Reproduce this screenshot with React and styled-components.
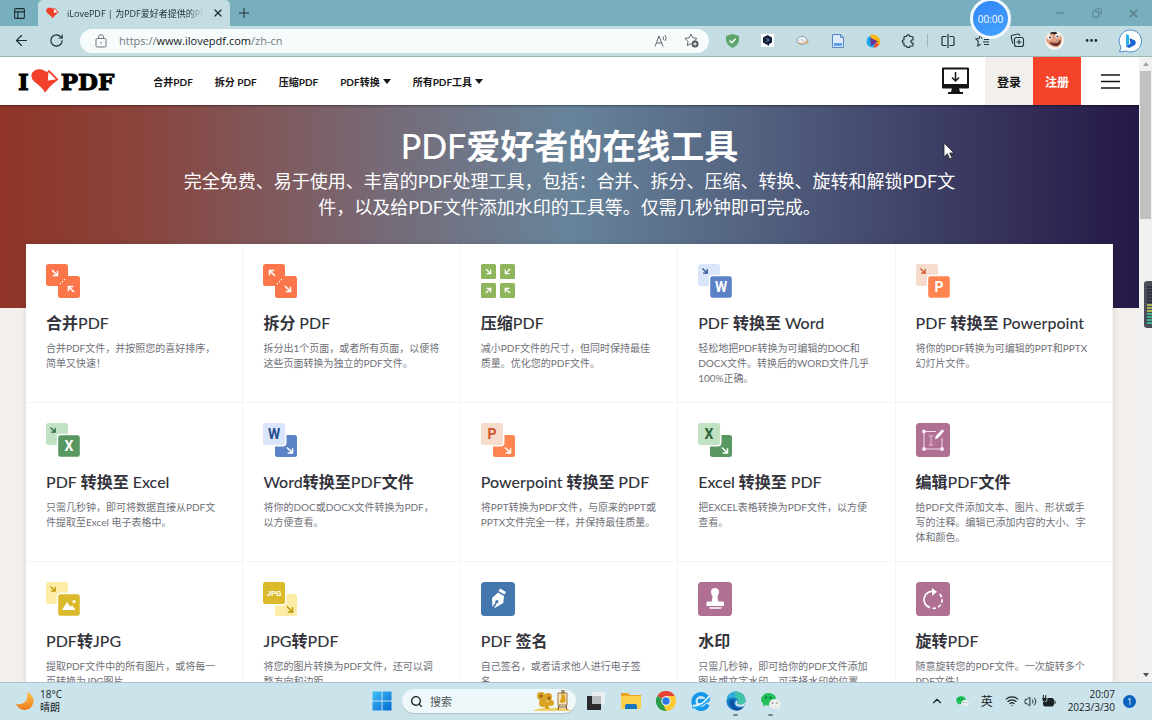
import styled, { createGlobalStyle } from "styled-components";
import {
    ArrowLeft, RotateCw, Plus, X, Minus, Copy, Search, Wifi, Volume2,
    ChevronUp, Ellipsis, PanelsTopLeft
} from "lucide-react";

const siteFont = `Lato, "Noto Sans CJK SC", sans-serif`
const systemFont = `"Open Sans", "Noto Sans CJK SC", sans-serif`

const colors = {
    orange: "#fb774b",
    green: "#8fb55c",
    plum: "#af7094",
    blue: "#4477ae",
}

const word = { dark: "#5b82c6", light: "#dae5fb", ink: "#26508f", letter: "W" }
const powerpoint = { dark: "#ff8450", light: "#f5dccc", ink: "#d2532a", letter: "P" }
const excel = { dark: "#58975f", light: "#c1e2c3", ink: "#2b643a", letter: "X" }
const jpg = { dark: "#dab92a", light: "#fdeca5", ink: "#b99700", letter: "JPG" }

const navItems = [
    { text: "合并PDF" },
    { text: "拆分 PDF" },
    { text: "压缩PDF" },
    { text: "PDF转换", menu: true },
    { text: "所有PDF工具", menu: true },
]

const tools = [
    { icon: <MergeIcon />, title: "合并PDF", text: "合并PDF文件，并按照您的喜好排序，简单又快速！" },
    { icon: <MergeIcon split />, title: "拆分 PDF", text: "拆分出1个页面，或者所有页面，以便将这些页面转换为独立的PDF文件。" },
    { icon: <CompressIcon />, title: "压缩PDF", text: "减小PDF文件的尺寸，但同时保持最佳质量。优化您的PDF文件。" },
    { icon: <FromPdfIcon {...word} />, title: "PDF 转换至 Word", text: "轻松地把PDF转换为可编辑的DOC和DOCX文件。转换后的WORD文件几乎100%正确。" },
    { icon: <FromPdfIcon {...powerpoint} />, title: "PDF 转换至 Powerpoint", text: "将你的PDF转换为可编辑的PPT和PPTX幻灯片文件。" },
    { icon: <FromPdfIcon {...excel} />, title: "PDF 转换至 Excel", text: "只需几秒钟，即可将数据直接从PDF文件提取至Excel 电子表格中。" },
    { icon: <ToPdfIcon {...word} />, title: "Word转换至PDF文件", text: "将你的DOC或DOCX文件转换为PDF，以方便查看。" },
    { icon: <ToPdfIcon {...powerpoint} />, title: "Powerpoint 转换至 PDF", text: "将PPT转换为PDF文件，与原来的PPT或PPTX文件完全一样，并保持最佳质量。" },
    { icon: <ToPdfIcon {...excel} />, title: "Excel 转换至 PDF", text: "把EXCEL表格转换为PDF文件，以方便查看。" },
    { icon: <EditIcon />, title: "编辑PDF文件", text: "给PDF文件添加文本、图片、形状或手写的注释。编辑已添加内容的大小、字体和颜色。" },
    { icon: <FromPdfIcon {...jpg} picture />, title: "PDF转JPG", text: "提取PDF文件中的所有图片，或将每一页转换为JPG图片。" },
    { icon: <ToJpgIcon />, title: "JPG转PDF", text: "将您的图片转换为PDF文件，还可以调整方向和边距。" },
    { icon: <SignIcon />, title: "PDF 签名", text: "自己签名，或者请求他人进行电子签名。" },
    { icon: <StampIcon />, title: "水印", text: "只需几秒钟，即可给你的PDF文件添加图片或文字水印。可选择水印的位置。" },
    { icon: <RotateIcon />, title: "旋转PDF", text: "随意旋转您的PDF文件。一次旋转多个PDF文件！" },
]

// Latin words are set lighter than the Chinese around them
function Mixed({ text }) {
    return text.split(/([A-Za-z]+)/).map((part, i) =>
        i % 2 === 1 ? <Latin key={i}>{part}</Latin> : part
    )
}

export default function App() {
    return (
        <Desktop>
            <GlobalStyle />
            <TabStrip />
            <Toolbar />
            <Content>
                <Site>
                    <SiteHeader />
                    <Hero>
                        <HeroTitle><Mixed text="PDF爱好者的在线工具" /></HeroTitle>
                        <HeroText>
                            完全免费、易于使用、丰富的PDF处理工具，包括：合并、拆分、压缩、转换、旋转和解锁PDF文件，以及给PDF文件添加水印的工具等。仅需几秒钟即可完成。
                        </HeroText>
                    </Hero>
                    <ToolGrid>
                        {tools.map(tool =>
                            <ToolCard href="#" key={tool.title}>
                                {tool.icon}
                                <ToolTitle><Mixed text={tool.title} /></ToolTitle>
                                <ToolText>{tool.text}</ToolText>
                            </ToolCard>
                        )}
                    </ToolGrid>
                </Site>
                <Scrollbar>
                    <ScrollArrow $up />
                    <ScrollThumb />
                    <ScrollArrow />
                </Scrollbar>
            </Content>
            <Taskbar />
            <Recorder>00:00</Recorder>
            <LevelMeter />
            <Pointer viewBox="0 0 12 18">
                <path d="M1 1v14l3.400-3.200 2.300 5.200 2.300-1-2.300-5H11z" fill="#fff" stroke="#222" strokeWidth=".8" />
            </Pointer>
        </Desktop>
    )
};

function TabStrip() {
    return (
        <TabStripStyle>
            <StripButton aria-label="标签操作"><PanelsTopLeft size={13} strokeWidth={2} /></StripButton>
            <Tab>
                <Heart width="13" height="12" />
                <TabTitle>iLovePDF | 为PDF爱好者提供的PDF</TabTitle>
                <TabClose aria-label="关闭标签"><X size={12} strokeWidth={2.500} /></TabClose>
            </Tab>
            <NewTab aria-label="新标签"><Plus size={16} strokeWidth={1.500} /></NewTab>
            <WindowControls>
                <WindowButton aria-label="最小化"><Minus size={12} strokeWidth={2} /></WindowButton>
                <WindowButton aria-label="还原"><Copy size={10} strokeWidth={2} transform="rotate(90)" /></WindowButton>
                <WindowButton aria-label="关闭"><X size={13} strokeWidth={2} /></WindowButton>
            </WindowControls>
        </TabStripStyle>
    )
}

function Toolbar() {
    return (
        <ToolbarStyle>
            <BarButton aria-label="返回"><ArrowLeft size={17} strokeWidth={1.700} /></BarButton>
            <BarButton aria-label="刷新"><RotateCw size={15} strokeWidth={1.800} /></BarButton>
            <AddressBar>
                <svg width="12" height="14" viewBox="0 0 12 14" fill="none" stroke="#6d7578">
                    <rect x="1" y="4.500" width="10" height="8.500" rx="1.200" />
                    <path d="M3.500 4.500V3.200a2.500 2.500 0 0 1 5 0v1.300" />
                    <circle cx="6" cy="8.700" r=".8" fill="#6d7578" stroke="none" />
                </svg>
                <Url href="#">https://<b>www.ilovepdf.com</b>/zh-cn</Url>
                <svg width="14" height="14" viewBox="0 0 14 14" fill="none" stroke="#62696c">
                    <path d="M1 12.500 5 2l4 10.500M2.500 9h5M9 2.500q1.500 1.500 0 3.500M11 1q2.500 2.500 0 6" />
                </svg>
                <svg width="15" height="15" viewBox="0 0 15 15" fill="none" stroke="#62696c">
                    <path d="m7 1 1.800 3.800 4.200.6-3 2.800M7 1 5.200 4.800 1 5.400l3 3-.7 4.100L7 10.600" />
                    <circle cx="11" cy="11" r="3.500" fill="#50575a" stroke="none" />
                    <path d="M9.200 11h3.600M11 9.200v3.600" stroke="#fff" />
                </svg>
            </AddressBar>
            <BarButton aria-label="防护">
                <svg width="13" height="14" viewBox="0 0 13 14">
                    <path d="M6.500 0 13 2v4.500Q12 11.500 6.500 14 1 11.500 0 6.500V2z" fill="#5fa66c" />
                    <path d="m3.600 6.500 2.200 2.200 3.800-4" fill="none" stroke="#fff" strokeWidth="1.300" />
                </svg>
            </BarButton>
            <BarButton aria-label="翻译">
                <svg width="13" height="13" viewBox="0 0 13 13">
                    <path d="M0 0h13v13H0z" fill="#fff" />
                    <path d="m6.500 1 4.500 2.500v5L8 10.200V12l-2-1.200-4-2.300v-5z" fill="#12233e" />
                    <path d="m5.500 4.500 2.500 1.500-2.500 1.500" fill="none" stroke="#9fb2ca" strokeWidth=".8" />
                </svg>
            </BarButton>
            <BarButton aria-label="扩展">
                <svg width="13" height="12" viewBox="0 0 13 12" fill="none">
                    <ellipse cx="6" cy="5.500" rx="5" ry="4" fill="#f3f7fa" stroke="#7d90a8" strokeWidth=".9" />
                    <path d="M3 5.500q4-2 5 1" stroke="#9fb0c4" strokeWidth=".8" />
                    <path d="M2 8q6 1 8-1.500h2.500L10 9.500" stroke="#e5a050" strokeWidth="1" />
                </svg>
            </BarButton>
            <BarButton aria-label="文档">
                <svg width="12" height="14" viewBox="0 0 12 14">
                    <path d="M.5.500h8l3 3v10H.5z" fill="#dce9fb" stroke="#5684c4" />
                    <path d="M2 9h8v3H2z" fill="#5aa3ea" />
                    <path d="M8.500.500v3h3" fill="none" stroke="#5684c4" />
                </svg>
            </BarButton>
            <BarButton aria-label="视频">
                <svg width="14" height="14" viewBox="0 0 14 14">
                    <circle cx="6.500" cy="7.500" r="6" fill="#1ca6e6" />
                    <path d="M4 1q6-2 9 3t-1 8L6 7z" fill="#fcb711" />
                    <path d="m4 3.500 8 4-7 4.500z" fill="#663399" />
                    <path d="M8 14q4-1 5-4l-4-1z" fill="#ef4d3c" />
                </svg>
            </BarButton>
            <BarButton aria-label="扩展管理">
                <svg width="14" height="14" viewBox="0 0 14 14" fill="none" stroke="#25343a" strokeWidth="1.200" strokeLinejoin="round">
                    <path d="M3 3.500q0-1 1-1h1.500a1.700 1.700 0 0 1 3.400 0H11q1 0 1 1V6a1.600 1.600 0 1 0 0 3v2q0 1-1 1H9a1.700 1.700 0 0 1-3.400 0H4q-1 0-1-1V9.200a1.700 1.700 0 0 1 0-3.400z" />
                </svg>
            </BarButton>
            <Separator />
            <BarButton aria-label="分屏">
                <svg width="14" height="14" viewBox="0 0 14 14" fill="none" stroke="#25343a" strokeWidth="1.200">
                    <path d="M5.500 2.500H2q-1 0-1 1v7q0 1 1 1h3.500M8.500 2.500H12q1 0 1 1v7q0 1-1 1H8.500M7 0v14" />
                </svg>
            </BarButton>
            <BarButton aria-label="收藏夹">
                <svg width="15" height="14" viewBox="0 0 15 14" fill="none" stroke="#25343a" strokeWidth="1.100">
                    <path d="M7 4.500 5.500 1 4 4.500 1 5l2.300 2.500L2.700 12l3-1.700M9 5.500h5M8 8h6M9 10.500h5" />
                </svg>
            </BarButton>
            <BarButton aria-label="集锦">
                <svg width="15" height="15" viewBox="0 0 15 15" fill="none" stroke="#25343a" strokeWidth="1.100">
                    <rect x="4.500" y="4.500" width="9" height="9" rx="2" />
                    <path d="M9 6.500v5M6.500 9h5M2.800 10.500 1.200 4.200q-.2-1.500 1.300-2L8 1q1.400-.2 2 1.800" />
                </svg>
            </BarButton>
            <BarButton $width={38} aria-label="用户">
                <svg width="19" height="19" viewBox="0 0 19 19">
                    <circle cx="9.500" cy="9.500" r="9.500" fill="#f7f4f0" />
                    <path d="M1 8q1-5 7-5 8-1 9 4 0 6-4 9-4 1-8-2-4-2-4-6z" fill="#e0a07c" />
                    <path d="M4.500 2.500q1-2 4-1.500 3-1 4 1.500l-3 1z" fill="#2f2a2d" />
                    <circle cx="4.500" cy="6.500" r="2.300" fill="#fff" /><circle cx="12.500" cy="5" r="2.300" fill="#fff" />
                    <circle cx="5" cy="6.500" r="1" fill="#222" /><circle cx="12.500" cy="5.500" r="1" fill="#222" />
                    <path d="M4.500 11.500q5 0 11-2.500 1 5-4 6-5 0-7-3.500z" fill="#6b2a24" />
                    <path d="M6 12q4 0 8-2v1q-4 2-8 1z" fill="#f3ddd0" />
                </svg>
            </BarButton>
            <BarButton $width={36} aria-label="更多"><Ellipsis size={15} strokeWidth={2.500} /></BarButton>
            <BarButton $width={42} aria-label="必应">
                <svg width="24" height="24" viewBox="0 0 24 24">
                    <path d="M12 1a11 11 0 1 1-4 21L1.500 23 3 18A11 11 0 0 1 12 1z" fill="#fff" stroke="#4e8fc8" />
                    <path d="m8 5 3 1.200v9L8 17.500z" fill="#2cb1ee" />
                    <path d="m11.500 9 5.500 2.500q2 3-1 5L11 19l-3-1.500 4.500-3z" fill="#1b62d4" />
                </svg>
            </BarButton>
        </ToolbarStyle>
    )
}

function SiteHeader() {
    return (
        <HeaderStyle>
            <Logo href="#">I<Heart width="28" height="24" />PDF</Logo>
            <Nav>
                {navItems.map(item =>
                    <NavLink href="#" key={item.text}>
                        {item.text}
                        {item.menu && <Caret />}
                    </NavLink>
                )}
            </Nav>
            <DesktopLink href="#" aria-label="桌面版">
                <svg width="29" height="28" viewBox="0 0 29 28">
                    <path d="M2 1.500h25v19H2z" fill="#fff" stroke="#161616" strokeWidth="2" strokeLinejoin="round" />
                    <path d="M1 17h27v4H1zM11 21h7l1 4h3v2H7v-2h3z" fill="#161616" />
                    <path d="M14.500 5v8.500M11 10.500l3.500 3.500 3.500-3.500" fill="none" stroke="#161616" strokeWidth="1.500" />
                </svg>
            </DesktopLink>
            <AccountButton>登录</AccountButton>
            <AccountButton $primary>注册</AccountButton>
            <MenuButton aria-label="菜单">
                <svg width="19" height="15" viewBox="0 0 19 15" stroke="#161616" strokeWidth="1.400">
                    <path d="M0 1h19M0 7.500h19M0 14h19" />
                </svg>
            </MenuButton>
        </HeaderStyle>
    )
}

function Taskbar() {
    return (
        <TaskbarStyle>
            <Weather>
                <svg width="18" height="18" viewBox="0 0 18 18">
                    <defs>
                        <linearGradient id="moon" x2="0" y2="1">
                            <stop stopColor="#fbc34a" /><stop offset="1" stopColor="#ef7a1c" />
                        </linearGradient>
                    </defs>
                    <path d="M11 0q7 3 6.500 10-1.500 7.500-8.500 8Q3 18 0 12q8 1 10.500-4 1.500-4 .5-8z" fill="url(#moon)" />
                </svg>
                <Lines><span>18°C</span><span>晴朗</span></Lines>
            </Weather>
            <TaskCenter>
                <TaskButton aria-label="开始">
                    <svg width="20" height="20" viewBox="0 0 20 20">
                        <defs>
                            <linearGradient id="win" x2="1" y2="1">
                                <stop stopColor="#3fc0f8" /><stop offset="1" stopColor="#0468d2" />
                            </linearGradient>
                        </defs>
                        <path d="M.5.500h9v9h-9zM10.500.500h9v9h-9zM.5 10.500h9v9h-9zM10.500 10.500h9v9h-9z" fill="url(#win)" />
                    </svg>
                </TaskButton>
                <SearchBox>
                    <Search size={13} strokeWidth={2.500} />
                    <input type="text" placeholder="搜索" aria-label="搜索" />
                    <svg width="40" height="22" viewBox="0 0 40 22">
                        <path d="M0 21q6-4 20-3 12-1 19 3z" fill="#efd16b" />
                        <g fill="#d9a321">
                            <circle cx="8" cy="6" r="4" /><circle cx="15" cy="7" r="4" />
                            <circle cx="10" cy="13" r="4" /><circle cx="18" cy="13" r="3" /><path d="M12 12h4v7h-4z" />
                        </g>
                        <circle cx="8" cy="6" r="1.500" fill="#8c5c14" /><circle cx="16" cy="8" r="1.500" fill="#8c5c14" />
                        <path d="M25 3h9v12h-9z" fill="#f5e6c0" stroke="#a5763a" />
                        <path d="M29 0h2v3h-2zM26 15l-1 5M33 15l1 5M25 17h9" stroke="#7c5528" fill="none" />
                        <path d="M28 5q4-2 4 2 2 5-2 6-4 0-3-3 2-1 1-5z" fill="#dca11c" />
                    </svg>
                </SearchBox>
                <TaskButton aria-label="任务视图">
                    <svg width="20" height="18" viewBox="0 0 20 18">
                        <path d="M1 4h14v14H1z" fill="#2b2b2e" /><path d="M6 0h13v12H6z" fill="#eef0f1" opacity=".85" />
                        <path d="M6 4h9v8H6z" fill="#b9bdc0" />
                    </svg>
                </TaskButton>
                <TaskButton aria-label="文件资源管理器">
                    <svg width="20" height="18" viewBox="0 0 20 18">
                        <path d="M0 1h7l2 2h11v6H0z" fill="#e8a51d" /><path d="M0 4h20v13H0z" fill="#fdcf4d" />
                        <path d="M4 17v-3q0-2 2-2h8q2 0 2 2v3z" fill="#1673be" />
                    </svg>
                </TaskButton>
                <TaskButton aria-label="Chrome">
                    <svg width="20" height="20" viewBox="0 0 20 20">
                        <path d="M10 10 1.300 5A10 10 0 0 1 18.700 5z" fill="#e54335" />
                        <path d="M10 10V5h8.700A10 10 0 0 1 10 20z" fill="#fcc934" />
                        <path d="M10 10 10.500 20A10 10 0 0 1 1.300 5z" fill="#2c9e4b" />
                        <path d="m10 20 5-8-5-2-2 5z" fill="#fcc934" />
                        <circle cx="10" cy="10" r="4.700" fill="#fff" /><circle cx="10" cy="10" r="3.700" fill="#2b78e8" />
                    </svg>
                </TaskButton>
                <TaskButton aria-label="浏览器">
                    <svg width="20" height="20" viewBox="0 0 20 20" fill="none">
                        <path d="M16.800 13.500A7.500 7.500 0 1 1 17 8q0 2-3 2H7" stroke="#1297ec" strokeWidth="4" />
                        <path d="M2 15q9 1 16.500-9.500" stroke="#fff" strokeWidth="2.500" />
                        <path d="M1 16.500q10 .5 18-10" stroke="#2fb0f5" strokeWidth="1.800" />
                    </svg>
                </TaskButton>
                <TaskButton $open aria-label="Edge">
                    <svg width="20" height="20" viewBox="0 0 20 20">
                        <circle cx="10" cy="10" r="9.500" fill="#1278c8" />
                        <path d="M.6 9Q2 1 10 .500q8 .5 9.500 8.500-.5 4.500-5 4.500-3 0-3-2 1.500-2-1-4Q5 5 .6 9z" fill="#41c3a8" />
                        <path d="M.6 9Q2 2 9 .600q-1 4 1.500 6.900Q5 5 .6 9z" fill="#2dadde" />
                        <path d="M8 9q-2 5 2.500 7.500 4 1.500 7.500-1-3 4.500-8 4Q3 16 4 11q1-3 4-2z" fill="#0b4f9e" />
                        <path d="M11 9q1 1 0 3 1 2 4 1.500 3-.5 4.300-2.500-.3 3-2.300 4.500-4 1-7-1-2-3 1-5.500z" fill="#d4e9f1" />
                    </svg>
                </TaskButton>
                <TaskButton $open aria-label="微信"><WeChatIcon width="20" height="17" /></TaskButton>
            </TaskCenter>
            <Tray>
                <ChevronUp size={14} strokeWidth={2} />
                <WeChatIcon width="13" height="11" />
                <Language>英</Language>
                <TrayIcons>
                    <Wifi size={14} strokeWidth={2} />
                    <Volume2 size={13} strokeWidth={1.800} />
                    <svg width="14" height="13" viewBox="0 0 14 13">
                        <rect x="1.500" y="3.500" width="10" height="7.500" rx="1.500" fill="#1b2225" stroke="#1b2225" />
                        <path d="M12.500 5.500h1v3.500h-1z" fill="#1b2225" />
                        <path d="M0 2.500h5v2.300q0 2-2.500 2T0 4.800z" fill="#1b2225" stroke="#cbe3eb" strokeWidth=".8" />
                        <path d="M1.300 0v3M3.700 0v3M2.500 6v5" stroke="#1b2225" fill="none" />
                    </svg>
                </TrayIcons>
                <Lines $end><span>20:07</span><span>2023/3/30</span></Lines>
                <Badge>1</Badge>
            </Tray>
        </TaskbarStyle>
    )
}

function Heart(props) {
    return (
        <svg viewBox="0 0 28 24" {...props}>
            <path d="M14 23.500Q11 18 3 12.500-1 8 1.200 3.500 5-1 11 .500l5 2.500L18 .800 27.500 10.500Q20 16 17 20q-1.500 2-3 3.500z" fill="#f2402b" />
            <path d="M17.500 3 16.800 11.500 25 10.500z" fill="#fff" />
        </svg>
    )
}

function WeChatIcon(props) {
    return (
        <svg viewBox="0 0 20 17" {...props}>
            <path d="M7.500 0Q15 .500 15 6.500q-1 6-7.500 6l-2.500-.5L2 13.500l.5-2.500Q0 9 0 6.500 1 .500 7.500 0z" fill="#1fc15c" />
            <circle cx="5" cy="4.500" r="1" fill="#17572f" /><circle cx="9.500" cy="4.500" r="1" fill="#17572f" />
            <path d="M13.500 6Q20 6.500 20 11q0 2-1.500 3.500l.5 2-2.500-1q-8 1-8.500-4.500Q8.500 6.500 13.500 6z" fill="#eceeee" />
            <circle cx="11.500" cy="10" r=".8" fill="#777" /><circle cx="16" cy="10" r=".8" fill="#777" />
        </svg>
    )
}

// arrow in a 7x7 box, pointing to the bottom right until turned
function Arrow({ x, y, turn = 0, color = "#fff", size = 7 }) {
    return (
        <path
            d="M.5.500 6 6M6 1.200V6H1.200"
            transform={`translate(${x} ${y}) scale(${size / 7}) rotate(${turn} 3.500 3.500)`}
            fill="none" stroke={color} strokeWidth="1.500"
        />
    )
}

function MergeIcon({ split }) {
    return (
        <ToolIcon viewBox="0 0 34 34">
            <rect width="22" height="22" rx="2.500" fill={colors.orange} />
            <rect x="12" y="12" width="22" height="22" rx="2.500" fill={colors.orange} />
            <path d="m14 20 6-6" stroke="#fff" strokeWidth="1.100" strokeDasharray="1.300 1.500" />
            <Arrow x={5.500} y={5.500} turn={split ? 180 : 0} />
            <Arrow x={21.500} y={21.500} turn={split ? 0 : 180} />
        </ToolIcon>
    )
}

function CompressIcon() {
    return (
        <ToolIcon viewBox="0 0 34 34">
            {[[0, 0, 0], [19, 0, 90], [19, 19, 180], [0, 19, 270]].map(([x, y, turn]) =>
                <g key={turn}>
                    <rect x={x} y={y} width="15" height="15" rx="1.500" fill={colors.green} />
                    <Arrow x={x + 4.500} y={y + 4.500} turn={turn} size={6} />
                </g>
            )}
        </ToolIcon>
    )
}

function FromPdfIcon({ dark, light, ink, letter, picture }) {
    return (
        <ToolIcon viewBox="0 0 34 34">
            <rect width="22" height="22" rx="2.500" fill={light} />
            <Arrow x={4} y={4} size={6} color={ink} />
            <rect x="11.500" y="11.500" width="23" height="23" rx="3" fill={dark} stroke="#fff" strokeWidth="1.400" />
            {picture
                ? <>
                    <path d="m16 28 5-8 3.500 5 1.500-2 3.500 5z" fill="#fff" />
                    <circle cx="28" cy="19.500" r="1.500" fill="#fff" />
                </>
                : <Letter x="23" y="28" fill="#fff">{letter}</Letter>}
        </ToolIcon>
    )
}

function ToPdfIcon({ dark, light, ink, letter }) {
    return (
        <ToolIcon viewBox="0 0 34 34">
            <rect x="12" y="12" width="22" height="22" rx="2.500" fill={dark} />
            <Arrow x={23.500} y={24} size={7} />
            <rect x="-.700" y="-.700" width="23.500" height="23.500" rx="3" fill={light} stroke="#fff" strokeWidth="1.400" />
            <Letter x="11" y="16" fill={ink}>{letter}</Letter>
        </ToolIcon>
    )
}

function ToJpgIcon() {
    return (
        <ToolIcon viewBox="0 0 34 34">
            <rect x="12" y="12" width="22" height="22" rx="2.500" fill={jpg.light} />
            <Arrow x={23.500} y={24} size={7} color={jpg.ink} />
            <rect x="-.700" y="-.700" width="23.500" height="23.500" rx="3" fill={jpg.dark} stroke="#fff" strokeWidth="1.400" />
            <Letter $small x="11" y="14" fill="#fff">JPG</Letter>
        </ToolIcon>
    )
}

function EditIcon() {
    return (
        <ToolIcon viewBox="0 0 34 34">
            <rect width="34" height="34" rx="3.500" fill={colors.plum} />
            <path d="M20 8.500H8V26h18V15" fill="none" stroke="#f4dcea" />
            <g fill="#f9e6f1">
                <circle cx="8" cy="8.500" r="2" /><circle cx="8" cy="26" r="2" /><circle cx="26" cy="26" r="2" />
            </g>
            <path d="M12.700 13h4.600M15 13v9M12.700 22h4.600" stroke="#e8bdd6" fill="none" />
            <path d="M26 6.500q2 .2 1.800 2L22 15l-3 1.500.8-3.500z" fill="#fff" />
        </ToolIcon>
    )
}

function SignIcon() {
    return (
        <ToolIcon viewBox="0 0 34 34">
            <rect width="34" height="34" rx="3.500" fill={colors.blue} />
            <path d="m19 6.500 6 3.500-1.500 2.600-6-3.500z" fill="#fff" />
            <path d="m17 10.500 6 3.500-.7 7L13 26.500l2.700-5.200a1.600 1.600 0 1 0-1.200-.7L11.500 25 11 16z" fill="#fff" />
        </ToolIcon>
    )
}

function StampIcon() {
    return (
        <ToolIcon viewBox="0 0 34 34">
            <rect width="34" height="34" rx="3.500" fill={colors.plum} />
            <path d="M17 6a4 4 0 0 1 4 4q0 2-1.500 4.500l.8 5H25q1 0 1 1V24H8.500v-3.500q0-1 1-1h4.300l.7-5Q13 12 13 10a4 4 0 0 1 4-4z" fill="#fff" />
            <path d="M11 25.200h13l-1 1.600H12z" fill="#fff" />
        </ToolIcon>
    )
}

function RotateIcon() {
    return (
        <ToolIcon viewBox="0 0 34 34">
            <rect width="34" height="34" rx="3.500" fill={colors.plum} />
            <path d="M18 9.500A8.300 8.300 0 0 0 14 25.600" fill="none" stroke="#fff" strokeWidth="1.700" />
            <path d="M16.500 26.200A8.300 8.300 0 0 0 23.500 12" fill="none" stroke="#fff" strokeWidth="1.700" strokeDasharray="3.600 2" />
            <path d="m16 6 5 3.700-5 4z" fill="#fff" />
        </ToolIcon>
    )
}

function LevelMeter() {
    return (
        <MeterStyle>
            <svg width="5" height="38" viewBox="0 0 5 38">
                {Array.from({ length: 13 }, (_, i) =>
                    <rect key={i} y={i * 3} width="5" height="2" fill={i < 6 ? "#30333f" : i < 9 ? "#a6b356" : "#3fb08d"} />
                )}
            </svg>
        </MeterStyle>
    )
}

const GlobalStyle = createGlobalStyle`
    *{
        box-sizing: border-box;
    }
    body{
        margin: 0;
        font-family: ${siteFont};
    }
    button, input{
        font-family: inherit;
        border: none;
        background: none;
        padding: 0;
    }
    a{
        color: inherit;
        text-decoration: none;
    }
`;

const Desktop = styled.div`
    position: relative;
    display: flex;
    flex-direction: column;
    height: 100vh;
    overflow: hidden;
`;

const TabStripStyle = styled.div`
    display: flex;
    flex-shrink: 0;
    height: 26px;
    background-color: #78afbe;
    color: #1d2c31;
    font-family: ${systemFont};
`;

const IconButton = styled.button`
    display: flex;
    align-items: center;
    justify-content: center;
    color: #1d2c31;
`;

const StripButton = styled(IconButton)`
    width: 38px;
`;

const Tab = styled.div`
    display: flex;
    align-items: center;
    gap: 8px;
    width: 192px;
    padding: 0 6px 0 8px;
    border-radius: 5px 5px 0 0;
    background-color: #c4dde3;
    svg{
        flex-shrink: 0;
    }
`;

const TabTitle = styled.span`
    flex: 1;
    overflow: hidden;
    white-space: nowrap;
    font-size: 9px;
    mask-image: linear-gradient(90deg, #000 88%, transparent);
`;

const TabClose = styled(IconButton)`
    width: 12px;
`;

const NewTab = styled(IconButton)`
    width: 28px;
`;

const WindowControls = styled.div`
    display: flex;
    margin-left: auto;
`;

const WindowButton = styled(IconButton)`
    width: 37px;
    color: #54757f;
`;

const ToolbarStyle = styled.div`
    display: flex;
    flex-shrink: 0;
    align-items: center;
    height: 31px;
    padding: 0 1px 1px 4px;
    background-color: #c4dde3;
    border-bottom: 1px solid #9db5bb;
    font-family: ${systemFont};
`;

const BarButton = styled(IconButton)`
    flex-shrink: 0;
    width: ${props => props.$width || 35}px;
    height: 28px;
`;

const AddressBar = styled.div`
    display: flex;
    flex: 1;
    align-items: center;
    gap: 12px;
    height: 24px;
    margin: 0 6px;
    padding: 0 10px 0 15px;
    border-radius: 12px;
    background-color: #f6fbfc;
    >svg{
        flex-shrink: 0;
    }
    >svg:last-child{
        margin-left: 4px;
    }
`;

const Url = styled.a`
    flex: 1;
    font-size: 11px;
    color: #71797c;
    b{
        font-weight: 400;
        color: #15191a;
    }
`;

const Separator = styled.div`
    width: 1px;
    height: 13px;
    margin: 0 2px;
    background-color: #9cb4ba;
`;

const Content = styled.div`
    display: flex;
    flex: 1;
    min-height: 0;
`;

const Site = styled.div`
    flex: 1;
    overflow: hidden;
    background-color: #f3efec;
`;

const HeaderStyle = styled.header`
    position: relative;
    display: flex;
    align-items: center;
    height: 48px;
    padding-left: 18px;
    background-color: white;
    color: #161616;
    box-shadow: 0 1px 2px rgba(0, 0, 0, 0.4);
`;

const Logo = styled.a`
    display: flex;
    align-items: center;
    gap: 2px;
    font-family: "DejaVu Serif", serif;
    font-size: 23px;
    font-weight: 700;
    color: black;
    -webkit-text-stroke: 1px black;
`;

const Nav = styled.nav`
    display: flex;
    flex: 1;
    gap: 22px;
    margin-left: 39px;
`;

const NavLink = styled.a`
    display: flex;
    align-items: center;
    gap: 3px;
    font-size: 10px;
    font-weight: 700;
    white-space: nowrap;
`;

const Caret = styled.span`
    border: 4px solid transparent;
    border-top: 5px solid #161616;
    border-bottom: none;
`;

const DesktopLink = styled.a`
    display: flex;
    margin-right: 15px;
`;

const AccountButton = styled.button`
    width: 48px;
    height: 48px;
    font-size: 12px;
    font-weight: 700;
    color: ${props => props.$primary ? "white" : "#161616"};
    background-color: ${props => props.$primary ? "#f5432a" : "#f3efec"};
`;

const MenuButton = styled(IconButton)`
    width: 58px;
    height: 48px;
`;

const Hero = styled.section`
    padding: 19px 24px 88px;
    background: linear-gradient(90deg, #8f3427 0%, #8a443c 12%, #776975 33%, #67849b 50%, #52607e 67%, #393860 85%, #251846 100%);
    color: white;
    text-align: center;
`;

const HeroTitle = styled.h1`
    margin: 0;
    font-size: 34px;
    font-weight: 700;
    line-height: 44px;
`;

const HeroText = styled.p`
    max-width: 784px;
    margin: 0 auto;
    font-size: 18px;
    line-height: 26px;
`;

const Latin = styled.span`
    font-weight: 500;
`;

const ToolGrid = styled.main`
    display: grid;
    grid-template-columns: repeat(5, 1fr);
    grid-auto-rows: minmax(159px, auto);
    margin: -64px 26px 0;
    background-color: white;
    box-shadow: 0 0 6px rgba(0, 0, 0, 0.12);
`;

const ToolCard = styled.a`
    padding: 20px 20px 16px;
    border-right: 1px solid #f5f5f6;
    border-bottom: 1px solid #f5f5f6;
`;

const ToolIcon = styled.svg`
    display: block;
    width: 34px;
    height: 34px;
    overflow: visible;
`;

const Letter = styled.text`
    font-family: Roboto, sans-serif;
    font-size: ${props => props.$small ? 8 : 14}px;
    font-weight: 700;
    text-anchor: middle;
`;

const ToolTitle = styled.h3`
    margin: 13px 0 6px;
    font-size: 16px;
    font-weight: 700;
    line-height: 24px;
    color: #33333b;
    white-space: nowrap;
`;

const ToolText = styled.p`
    margin: 0;
    font-size: 10px;
    line-height: 15px;
    color: #707078;
`;

const Scrollbar = styled.div`
    display: flex;
    flex-direction: column;
    align-items: center;
    width: 13px;
    padding: 5px 0;
    background-color: #f1f1f1;
`;

const ScrollArrow = styled.div`
    border: 3px solid transparent;
    border-top: ${props => props.$up ? "none" : "4px solid #505050"};
    border-bottom: ${props => props.$up ? "4px solid #a3a3a3" : "none"};
    margin-top: ${props => props.$up ? 0 : "auto"};
`;

const ScrollThumb = styled.div`
    width: 11px;
    height: 24%;
    margin-top: 5px;
    background-color: #c1c1c1;
`;

const TaskbarStyle = styled.footer`
    display: grid;
    grid-template-columns: 1fr auto 1fr;
    align-items: center;
    flex-shrink: 0;
    height: 38px;
    padding: 0 16px;
    background-color: #cbe3eb;
    box-shadow: inset 0 1px #aac3cd;
    font-family: ${systemFont};
    color: #1b2225;
`;

const Weather = styled.div`
    display: flex;
    align-items: center;
    gap: 6px;
`;

const Lines = styled.div`
    display: flex;
    flex-direction: column;
    align-items: ${props => props.$end ? "flex-end" : "flex-start"};
    font-size: 10px;
    line-height: 13px;
`;

const TaskCenter = styled.div`
    display: flex;
    align-items: center;
`;

const TaskButton = styled(IconButton)`
    position: relative;
    width: 35px;
    height: 38px;
    &::after{
        content: "";
        display: ${props => props.$open ? "block" : "none"};
        position: absolute;
        bottom: 4px;
        width: 5px;
        height: 2px;
        border-radius: 1px;
        background-color: #74858c;
    }
`;

const SearchBox = styled.label`
    display: flex;
    align-items: center;
    gap: 7px;
    width: 174px;
    height: 24px;
    margin: 0 2px 0 3px;
    padding: 0 3px 0 8px;
    border-radius: 12px;
    background-color: #eef7fa;
    box-shadow: 0 1px 1px rgba(0, 0, 0, 0.15);
    svg{
        flex-shrink: 0;
    }
    input{
        flex: 1;
        min-width: 0;
        font-size: 11px;
        outline: none;
    }
    input::placeholder{
        color: #50585b;
    }
`;

const Tray = styled.div`
    display: flex;
    align-items: center;
    justify-content: flex-end;
    gap: 12px;
`;

const Language = styled.span`
    font-size: 12px;
`;

const TrayIcons = styled.div`
    display: flex;
    align-items: center;
    gap: 5px;
`;

const Badge = styled.span`
    width: 13px;
    height: 13px;
    margin-left: -4px;
    border-radius: 50%;
    background-color: #0a63bd;
    color: white;
    font-size: 9px;
    line-height: 13px;
    text-align: center;
`;

const Recorder = styled.div`
    position: absolute;
    top: -2px;
    right: 141px;
    width: 41px;
    height: 41px;
    border: 3px solid #f1f7fb;
    border-radius: 50%;
    background: linear-gradient(160deg, #2f86f7, #45a2fd);
    color: white;
    font-family: ${systemFont};
    font-size: 10px;
    line-height: 36px;
    text-align: center;
`;

const MeterStyle = styled.div`
    position: absolute;
    top: 281px;
    right: 0;
    width: 8px;
    height: 47px;
    padding: 5px 0 0 3px;
    border-radius: 3px 0 0 3px;
    background-color: #4b4e5a;
    overflow: hidden;
    svg{
        display: block;
    }
`;

const Pointer = styled.svg`
    position: absolute;
    top: 142px;
    left: 943px;
    width: 12px;
    height: 18px;
`;
